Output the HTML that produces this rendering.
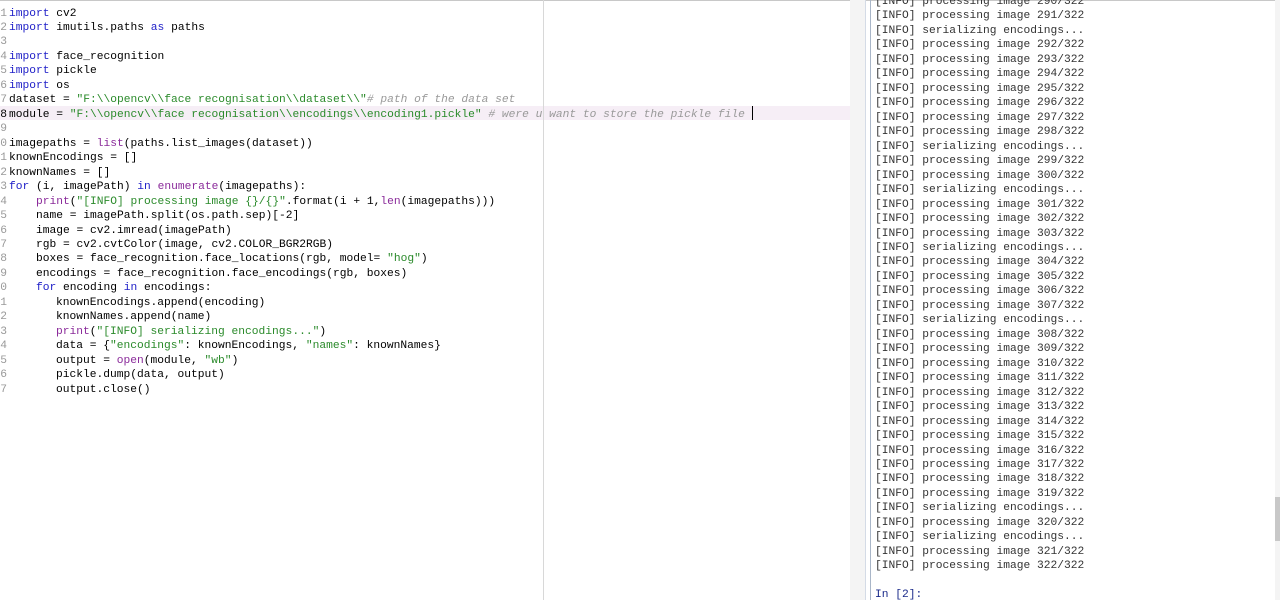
<!DOCTYPE html>
<html><head><meta charset="utf-8"><style>
html,body{margin:0;padding:0;width:1280px;height:600px;overflow:hidden;background:#fff;position:relative}
.mono{font-family:"Liberation Mono",monospace;font-size:11.25px;line-height:14.47px;white-space:pre;color:#000}
#top{position:absolute;left:0;top:0;width:1280px;height:1px;background:#c8c8c8}
#ed{position:absolute;left:0;top:6.5px;width:850px}
.ln{position:absolute;left:-20px;width:27px;text-align:right;color:#999}
.cl{position:absolute;left:9px}
.k{color:#2020c8}.s{color:#2a8a2a}.b{color:#8a2a9a}.c{color:#999;font-style:italic}
#hl{position:absolute;left:0;top:106px;width:850px;height:14px;background:#f6eef6}
#guide{position:absolute;left:543px;top:0;width:1px;height:600px;background:#d8d8d8}
#gut{position:absolute;left:850px;top:0;width:15px;height:600px;background:#f4f4f4}
#b1{position:absolute;left:865px;top:0;width:1px;height:600px;background:#d4dbe6}
#b2{position:absolute;left:870px;top:0;width:1px;height:600px;background:#a9b6c8}
#con{position:absolute;left:875px;top:-5px}
#sb{position:absolute;left:1275px;top:0;width:5px;height:600px;background:#f4f4f4}
#th{position:absolute;left:1275px;top:497px;width:5px;height:44px;background:#c8c8c8}
#cur{position:absolute;left:752px;top:106px;width:1px;height:14px;background:#000}
</style></head><body>
<div id="top"></div>
<div id="hl"></div>
<div id="guide"></div>
<div id="cur"></div>
<div id="ed" class="mono">
<div class="ln" style="top:0">1</div><div class="cl" style="top:0"><span class="k">import</span> cv2</div>
<div class="ln" style="top:14.47px">2</div><div class="cl" style="top:14.47px"><span class="k">import</span> imutils.paths <span class="k">as</span> paths</div>
<div class="ln" style="top:28.94px">3</div>
<div class="ln" style="top:43.41px">4</div><div class="cl" style="top:43.41px"><span class="k">import</span> face_recognition</div>
<div class="ln" style="top:57.88px">5</div><div class="cl" style="top:57.88px"><span class="k">import</span> pickle</div>
<div class="ln" style="top:72.35px">6</div><div class="cl" style="top:72.35px"><span class="k">import</span> os</div>
<div class="ln" style="top:86.82px">7</div><div class="cl" style="top:86.82px">dataset = <span class="s">"F:\\opencv\\face recognisation\\dataset\\"</span><span class="c"># path of the data set</span></div>
<div class="ln" style="top:101.29px;color:#000">8</div><div class="cl" style="top:101.29px">module = <span class="s">"F:\\opencv\\face recognisation\\encodings\\encoding1.pickle"</span> <span class="c"># were u want to store the pickle file</span></div>
<div class="ln" style="top:115.76px">9</div>
<div class="ln" style="top:130.23px">10</div><div class="cl" style="top:130.23px">imagepaths = <span class="b">list</span>(paths.list_images(dataset))</div>
<div class="ln" style="top:144.7px">11</div><div class="cl" style="top:144.7px">knownEncodings = []</div>
<div class="ln" style="top:159.17px">12</div><div class="cl" style="top:159.17px">knownNames = []</div>
<div class="ln" style="top:173.64px">13</div><div class="cl" style="top:173.64px"><span class="k">for</span> (i, imagePath) <span class="k">in</span> <span class="b">enumerate</span>(imagepaths):</div>
<div class="ln" style="top:188.11px">14</div><div class="cl" style="top:188.11px;left:36px"><span class="b">print</span>(<span class="s">"[INFO] processing image {}/{}"</span>.format(i + 1,<span class="b">len</span>(imagepaths)))</div>
<div class="ln" style="top:202.58px">15</div><div class="cl" style="top:202.58px;left:36px">name = imagePath.split(os.path.sep)[-2]</div>
<div class="ln" style="top:217.05px">16</div><div class="cl" style="top:217.05px;left:36px">image = cv2.imread(imagePath)</div>
<div class="ln" style="top:231.52px">17</div><div class="cl" style="top:231.52px;left:36px">rgb = cv2.cvtColor(image, cv2.COLOR_BGR2RGB)</div>
<div class="ln" style="top:245.99px">18</div><div class="cl" style="top:245.99px;left:36px">boxes = face_recognition.face_locations(rgb, model= <span class="s">"hog"</span>)</div>
<div class="ln" style="top:260.46px">19</div><div class="cl" style="top:260.46px;left:36px">encodings = face_recognition.face_encodings(rgb, boxes)</div>
<div class="ln" style="top:274.93px">20</div><div class="cl" style="top:274.93px;left:36px"><span class="k">for</span> encoding <span class="k">in</span> encodings:</div>
<div class="ln" style="top:289.4px">21</div><div class="cl" style="top:289.4px;left:56px">knownEncodings.append(encoding)</div>
<div class="ln" style="top:303.87px">22</div><div class="cl" style="top:303.87px;left:56px">knownNames.append(name)</div>
<div class="ln" style="top:318.34px">23</div><div class="cl" style="top:318.34px;left:56px"><span class="b">print</span>(<span class="s">"[INFO] serializing encodings..."</span>)</div>
<div class="ln" style="top:332.81px">24</div><div class="cl" style="top:332.81px;left:56px">data = {<span class="s">"encodings"</span>: knownEncodings, <span class="s">"names"</span>: knownNames}</div>
<div class="ln" style="top:347.28px">25</div><div class="cl" style="top:347.28px;left:56px">output = <span class="b">open</span>(module, <span class="s">"wb"</span>)</div>
<div class="ln" style="top:361.75px">26</div><div class="cl" style="top:361.75px;left:56px">pickle.dump(data, output)</div>
<div class="ln" style="top:376.22px">27</div><div class="cl" style="top:376.22px;left:56px">output.close()</div>
</div>
<div id="gut"></div><div id="b1"></div><div id="b2"></div>
<div id="con" class="mono" style="color:#333">[INFO] processing image 290/322
[INFO] processing image 291/322
[INFO] serializing encodings...
[INFO] processing image 292/322
[INFO] processing image 293/322
[INFO] processing image 294/322
[INFO] processing image 295/322
[INFO] processing image 296/322
[INFO] processing image 297/322
[INFO] processing image 298/322
[INFO] serializing encodings...
[INFO] processing image 299/322
[INFO] processing image 300/322
[INFO] serializing encodings...
[INFO] processing image 301/322
[INFO] processing image 302/322
[INFO] processing image 303/322
[INFO] serializing encodings...
[INFO] processing image 304/322
[INFO] processing image 305/322
[INFO] processing image 306/322
[INFO] processing image 307/322
[INFO] serializing encodings...
[INFO] processing image 308/322
[INFO] processing image 309/322
[INFO] processing image 310/322
[INFO] processing image 311/322
[INFO] processing image 312/322
[INFO] processing image 313/322
[INFO] processing image 314/322
[INFO] processing image 315/322
[INFO] processing image 316/322
[INFO] processing image 317/322
[INFO] processing image 318/322
[INFO] processing image 319/322
[INFO] serializing encodings...
[INFO] processing image 320/322
[INFO] serializing encodings...
[INFO] processing image 321/322
[INFO] processing image 322/322

<span style="color:#1a2a8a">In [2]:</span></div>
<div id="sb"></div><div id="th"></div>
</body></html>
